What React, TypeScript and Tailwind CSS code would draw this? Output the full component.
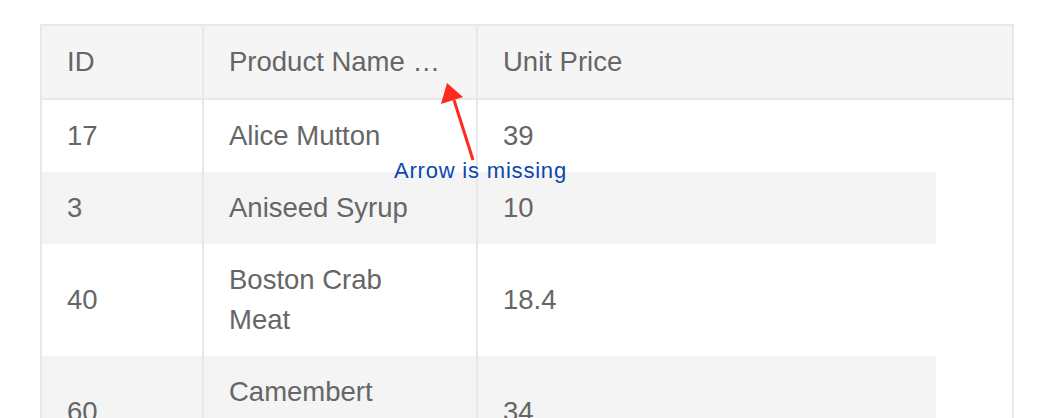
import React from 'react';

const rows = [
  { id: 17, name: 'Alice Mutton', price: '39' },
  { id: 3, name: 'Aniseed Syrup', price: '10' },
  { id: 40, name: 'Boston Crab Meat', price: '18.4' },
  { id: 60, name: 'Camembert Pierrot', price: '34' },
];

export default function App() {
  return (
    <div className="relative min-h-screen bg-white pt-[24px] pl-[40px] text-[#666] font-['Liberation_Sans',Arial,sans-serif] text-[27.5px] leading-[40px]">
      <div className="w-[974px] border-2 border-[#e8e8e8]">
        {/* Header */}
        <div className="flex h-[74px] bg-[#f5f5f5] border-b-2 border-[#e8e8e8]">
          <div className="w-[162px] shrink-0 flex items-center pl-[25px] border-r-2 border-[#e8e8e8]">ID</div>
          <div className="w-[274px] shrink-0 flex items-center pl-[25px] border-r-2 border-[#e8e8e8] whitespace-nowrap">
            Product Name …
          </div>
          <div className="flex-1 flex items-center pl-[25px]">Unit Price</div>
        </div>

        {/* Body */}
        <div className="w-[894px]">
          {rows.map((r, i) => (
            <div key={r.id} className={`flex ${i % 2 === 1 ? 'bg-[#f4f4f4]' : 'bg-white'}`}>
              <div className="w-[162px] shrink-0 flex items-center px-[25px] py-4 border-r-2 border-[#e8e8e8]">{r.id}</div>
              <div className="w-[274px] shrink-0 flex items-center pl-[25px] pr-[30px] py-4 border-r-2 border-[#e8e8e8]">{r.name}</div>
              <div className="flex-1 flex items-center px-[25px] py-4">{r.price}</div>
            </div>
          ))}
        </div>
      </div>

      {/* Annotation */}
      <svg className="absolute left-0 top-0 pointer-events-none" width="1054" height="418">
        <line x1="473" y1="160" x2="454" y2="100" stroke="#ff2a1f" strokeWidth="3" />
        <polygon points="447,83 441,104 463,97" fill="#ff2a1f" />
      </svg>
      <div className="absolute left-[394px] top-[157px] text-[22px] tracking-[0.8px] leading-[28px] text-[#0a47ae] whitespace-nowrap">
        Arrow is missing
      </div>
    </div>
  );
}
